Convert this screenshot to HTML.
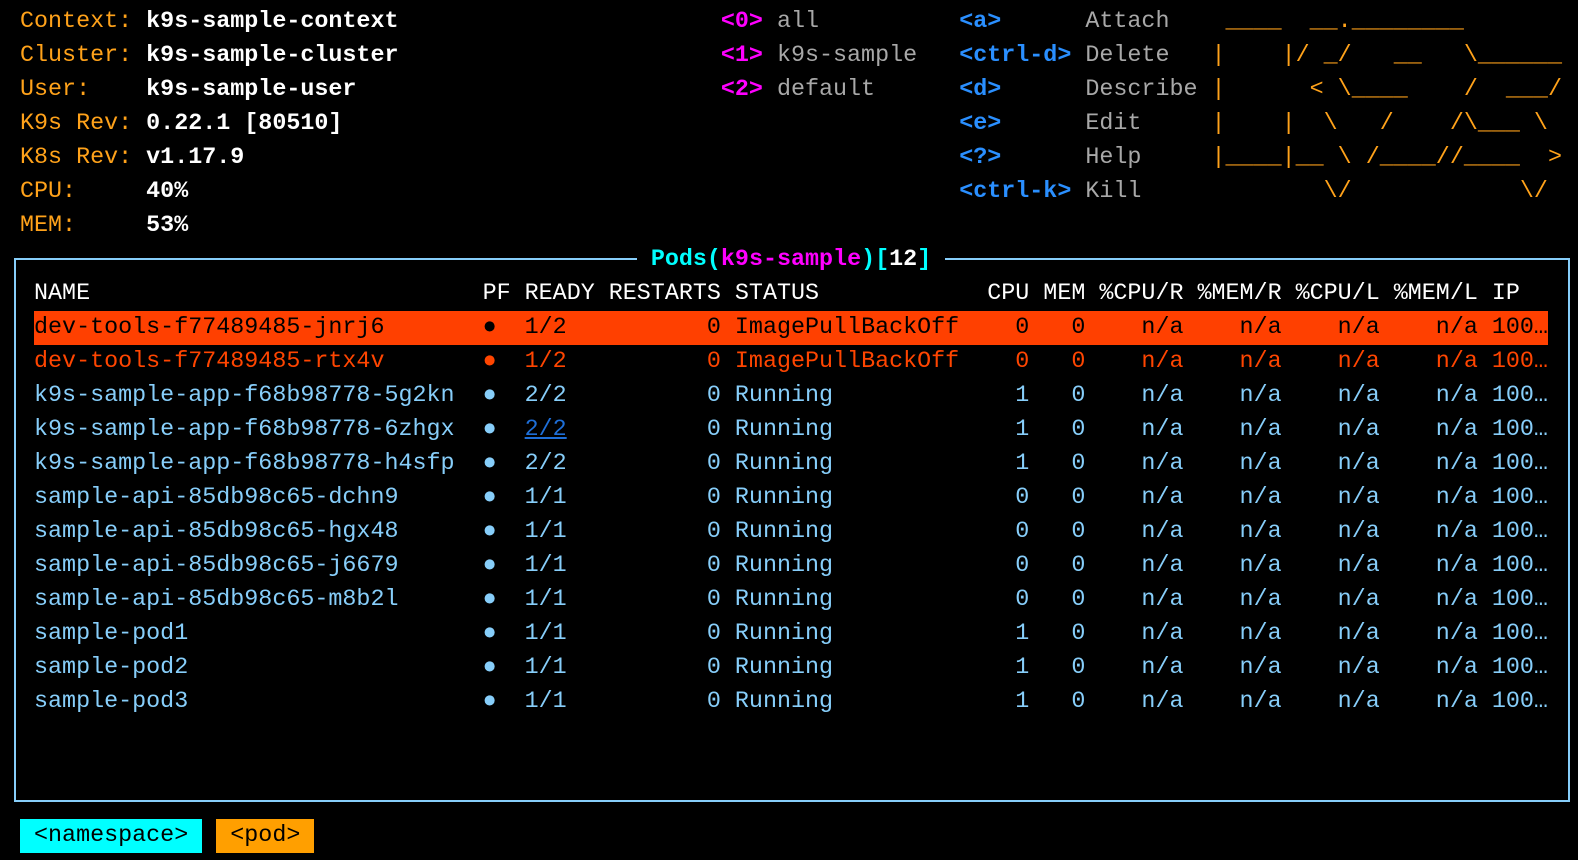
<!DOCTYPE html>
<html><head><meta charset="utf-8">
<style>
html,body{margin:0;padding:0;background:#000;width:1578px;height:860px;overflow:hidden}
#s{position:absolute;left:20px;top:2px;width:1558px;height:858px;font-family:"Liberation Mono","DejaVu Sans Mono",monospace;font-size:23.36px;color:#fff}
.r{position:absolute;left:0;height:34px;line-height:34px;width:1550px;white-space:pre}
.c{position:absolute;top:0;white-space:pre}
.o{color:#ffa21a}.w{color:#fff;font-weight:bold}.m{color:#ff00ff;font-weight:bold}.g{color:#a8a8a8}
.b{color:#2a8fff;font-weight:bold}.lb{color:#87cefa}.er{color:#ff4500}
.logo{color:#ffa21a}
#box{position:absolute;left:14px;top:258px;width:1552px;height:540px;border:2px solid #87cefa}
</style></head><body>
<div id="box"></div>
<div id="s">
<div class="r" style="top:3px"><span class="c o" style="left:0">Context:</span><span class="c w" style="left:9ch">k9s-sample-context</span><span class="c m" style="left:50ch">&lt;0&gt;</span><span class="c g" style="left:54ch">all</span><span class="c b" style="left:67ch">&lt;a&gt;</span><span class="c g" style="left:76ch">Attach</span><span class="c logo" style="left:85ch"> ____  __.________       </span></div>
<div class="r" style="top:37px"><span class="c o" style="left:0">Cluster:</span><span class="c w" style="left:9ch">k9s-sample-cluster</span><span class="c m" style="left:50ch">&lt;1&gt;</span><span class="c g" style="left:54ch">k9s-sample</span><span class="c b" style="left:67ch">&lt;ctrl-d&gt;</span><span class="c g" style="left:76ch">Delete</span><span class="c logo" style="left:85ch">|    |/ _/   __   \______</span></div>
<div class="r" style="top:71px"><span class="c o" style="left:0">User:</span><span class="c w" style="left:9ch">k9s-sample-user</span><span class="c m" style="left:50ch">&lt;2&gt;</span><span class="c g" style="left:54ch">default</span><span class="c b" style="left:67ch">&lt;d&gt;</span><span class="c g" style="left:76ch">Describe</span><span class="c logo" style="left:85ch">|      &lt; \____    /  ___/</span></div>
<div class="r" style="top:105px"><span class="c o" style="left:0">K9s Rev:</span><span class="c w" style="left:9ch">0.22.1 [80510]</span><span class="c b" style="left:67ch">&lt;e&gt;</span><span class="c g" style="left:76ch">Edit</span><span class="c logo" style="left:85ch">|    |  \   /    /\___ \ </span></div>
<div class="r" style="top:139px"><span class="c o" style="left:0">K8s Rev:</span><span class="c w" style="left:9ch">v1.17.9</span><span class="c b" style="left:67ch">&lt;?&gt;</span><span class="c g" style="left:76ch">Help</span><span class="c logo" style="left:85ch">|____|__ \ /____//____  &gt;</span></div>
<div class="r" style="top:173px"><span class="c o" style="left:0">CPU:</span><span class="c w" style="left:9ch">40%</span><span class="c b" style="left:67ch">&lt;ctrl-k&gt;</span><span class="c g" style="left:76ch">Kill</span><span class="c logo" style="left:85ch">        \/            \/ </span></div>
<div class="r" style="top:207px"><span class="c o" style="left:0">MEM:</span><span class="c w" style="left:9ch">53%</span></div>
<div class="r" style="top:241px"><span class="c" style="left:44ch;background:#000;font-weight:bold"> <span style="color:#00ffff">Pods(</span><span style="color:#ff00ff">k9s-sample</span><span style="color:#00ffff">)[</span><span style="color:#fff">12</span><span style="color:#00ffff">]</span> </span></div>
<div class="r" style="top:275px;color:#fff"><span class="c" style="left:1ch">NAME</span><span class="c" style="left:33ch">PF</span><span class="c" style="left:36ch">READY</span><span class="c" style="left:42ch">RESTARTS</span><span class="c" style="left:51ch">STATUS</span><span class="c" style="left:69ch">CPU</span><span class="c" style="left:73ch">MEM</span><span class="c" style="left:77ch">%CPU/R</span><span class="c" style="left:84ch">%MEM/R</span><span class="c" style="left:91ch">%CPU/L</span><span class="c" style="left:98ch">%MEM/L</span><span class="c" style="left:105ch">IP</span></div>

<div class="r" style="top:309px;color:#000"><span class="c" style="left:1ch;width:108ch;height:34px;background:#ff4000"></span><span class="c" style="left:1ch">dev-tools-f77489485-jnrj6</span><span class="c" style="left:33ch">●</span><span class="c" style="left:36ch">1/2</span><span class="c" style="left:49ch">0</span><span class="c" style="left:51ch">ImagePullBackOff</span><span class="c" style="left:71ch">0</span><span class="c" style="left:75ch">0</span><span class="c" style="left:80ch">n/a</span><span class="c" style="left:87ch">n/a</span><span class="c" style="left:94ch">n/a</span><span class="c" style="left:101ch">n/a</span><span class="c" style="left:105ch">100…</span></div>

<div class="r er" style="top:343px"><span class="c" style="left:1ch">dev-tools-f77489485-rtx4v</span><span class="c" style="left:33ch">●</span><span class="c" style="left:36ch">1/2</span><span class="c" style="left:49ch">0</span><span class="c" style="left:51ch">ImagePullBackOff</span><span class="c" style="left:71ch">0</span><span class="c" style="left:75ch">0</span><span class="c" style="left:80ch">n/a</span><span class="c" style="left:87ch">n/a</span><span class="c" style="left:94ch">n/a</span><span class="c" style="left:101ch">n/a</span><span class="c" style="left:105ch">100…</span></div>

<div class="r lb" style="top:377px"><span class="c" style="left:1ch">k9s-sample-app-f68b98778-5g2kn</span><span class="c" style="left:33ch">●</span><span class="c" style="left:36ch">2/2</span><span class="c" style="left:49ch">0</span><span class="c" style="left:51ch">Running</span><span class="c" style="left:71ch">1</span><span class="c" style="left:75ch">0</span><span class="c" style="left:80ch">n/a</span><span class="c" style="left:87ch">n/a</span><span class="c" style="left:94ch">n/a</span><span class="c" style="left:101ch">n/a</span><span class="c" style="left:105ch">100…</span></div>

<div class="r lb" style="top:411px"><span class="c" style="left:1ch">k9s-sample-app-f68b98778-6zhgx</span><span class="c" style="left:33ch">●</span><span class="c" style="left:36ch;color:#1e6fd9;text-decoration:underline">2/2</span><span class="c" style="left:49ch">0</span><span class="c" style="left:51ch">Running</span><span class="c" style="left:71ch">1</span><span class="c" style="left:75ch">0</span><span class="c" style="left:80ch">n/a</span><span class="c" style="left:87ch">n/a</span><span class="c" style="left:94ch">n/a</span><span class="c" style="left:101ch">n/a</span><span class="c" style="left:105ch">100…</span></div>

<div class="r lb" style="top:445px"><span class="c" style="left:1ch">k9s-sample-app-f68b98778-h4sfp</span><span class="c" style="left:33ch">●</span><span class="c" style="left:36ch">2/2</span><span class="c" style="left:49ch">0</span><span class="c" style="left:51ch">Running</span><span class="c" style="left:71ch">1</span><span class="c" style="left:75ch">0</span><span class="c" style="left:80ch">n/a</span><span class="c" style="left:87ch">n/a</span><span class="c" style="left:94ch">n/a</span><span class="c" style="left:101ch">n/a</span><span class="c" style="left:105ch">100…</span></div>

<div class="r lb" style="top:479px"><span class="c" style="left:1ch">sample-api-85db98c65-dchn9</span><span class="c" style="left:33ch">●</span><span class="c" style="left:36ch">1/1</span><span class="c" style="left:49ch">0</span><span class="c" style="left:51ch">Running</span><span class="c" style="left:71ch">0</span><span class="c" style="left:75ch">0</span><span class="c" style="left:80ch">n/a</span><span class="c" style="left:87ch">n/a</span><span class="c" style="left:94ch">n/a</span><span class="c" style="left:101ch">n/a</span><span class="c" style="left:105ch">100…</span></div>

<div class="r lb" style="top:513px"><span class="c" style="left:1ch">sample-api-85db98c65-hgx48</span><span class="c" style="left:33ch">●</span><span class="c" style="left:36ch">1/1</span><span class="c" style="left:49ch">0</span><span class="c" style="left:51ch">Running</span><span class="c" style="left:71ch">0</span><span class="c" style="left:75ch">0</span><span class="c" style="left:80ch">n/a</span><span class="c" style="left:87ch">n/a</span><span class="c" style="left:94ch">n/a</span><span class="c" style="left:101ch">n/a</span><span class="c" style="left:105ch">100…</span></div>

<div class="r lb" style="top:547px"><span class="c" style="left:1ch">sample-api-85db98c65-j6679</span><span class="c" style="left:33ch">●</span><span class="c" style="left:36ch">1/1</span><span class="c" style="left:49ch">0</span><span class="c" style="left:51ch">Running</span><span class="c" style="left:71ch">0</span><span class="c" style="left:75ch">0</span><span class="c" style="left:80ch">n/a</span><span class="c" style="left:87ch">n/a</span><span class="c" style="left:94ch">n/a</span><span class="c" style="left:101ch">n/a</span><span class="c" style="left:105ch">100…</span></div>

<div class="r lb" style="top:581px"><span class="c" style="left:1ch">sample-api-85db98c65-m8b2l</span><span class="c" style="left:33ch">●</span><span class="c" style="left:36ch">1/1</span><span class="c" style="left:49ch">0</span><span class="c" style="left:51ch">Running</span><span class="c" style="left:71ch">0</span><span class="c" style="left:75ch">0</span><span class="c" style="left:80ch">n/a</span><span class="c" style="left:87ch">n/a</span><span class="c" style="left:94ch">n/a</span><span class="c" style="left:101ch">n/a</span><span class="c" style="left:105ch">100…</span></div>

<div class="r lb" style="top:615px"><span class="c" style="left:1ch">sample-pod1</span><span class="c" style="left:33ch">●</span><span class="c" style="left:36ch">1/1</span><span class="c" style="left:49ch">0</span><span class="c" style="left:51ch">Running</span><span class="c" style="left:71ch">1</span><span class="c" style="left:75ch">0</span><span class="c" style="left:80ch">n/a</span><span class="c" style="left:87ch">n/a</span><span class="c" style="left:94ch">n/a</span><span class="c" style="left:101ch">n/a</span><span class="c" style="left:105ch">100…</span></div>

<div class="r lb" style="top:649px"><span class="c" style="left:1ch">sample-pod2</span><span class="c" style="left:33ch">●</span><span class="c" style="left:36ch">1/1</span><span class="c" style="left:49ch">0</span><span class="c" style="left:51ch">Running</span><span class="c" style="left:71ch">1</span><span class="c" style="left:75ch">0</span><span class="c" style="left:80ch">n/a</span><span class="c" style="left:87ch">n/a</span><span class="c" style="left:94ch">n/a</span><span class="c" style="left:101ch">n/a</span><span class="c" style="left:105ch">100…</span></div>

<div class="r lb" style="top:683px"><span class="c" style="left:1ch">sample-pod3</span><span class="c" style="left:33ch">●</span><span class="c" style="left:36ch">1/1</span><span class="c" style="left:49ch">0</span><span class="c" style="left:51ch">Running</span><span class="c" style="left:71ch">1</span><span class="c" style="left:75ch">0</span><span class="c" style="left:80ch">n/a</span><span class="c" style="left:87ch">n/a</span><span class="c" style="left:94ch">n/a</span><span class="c" style="left:101ch">n/a</span><span class="c" style="left:105ch">100…</span></div>

<div class="r" style="top:817px;color:#000"><span class="c" style="left:0;background:#00ffff"> &lt;namespace&gt; </span><span class="c" style="left:14ch;background:#ff9f00"> &lt;pod&gt; </span></div>
</div>
</body></html>
